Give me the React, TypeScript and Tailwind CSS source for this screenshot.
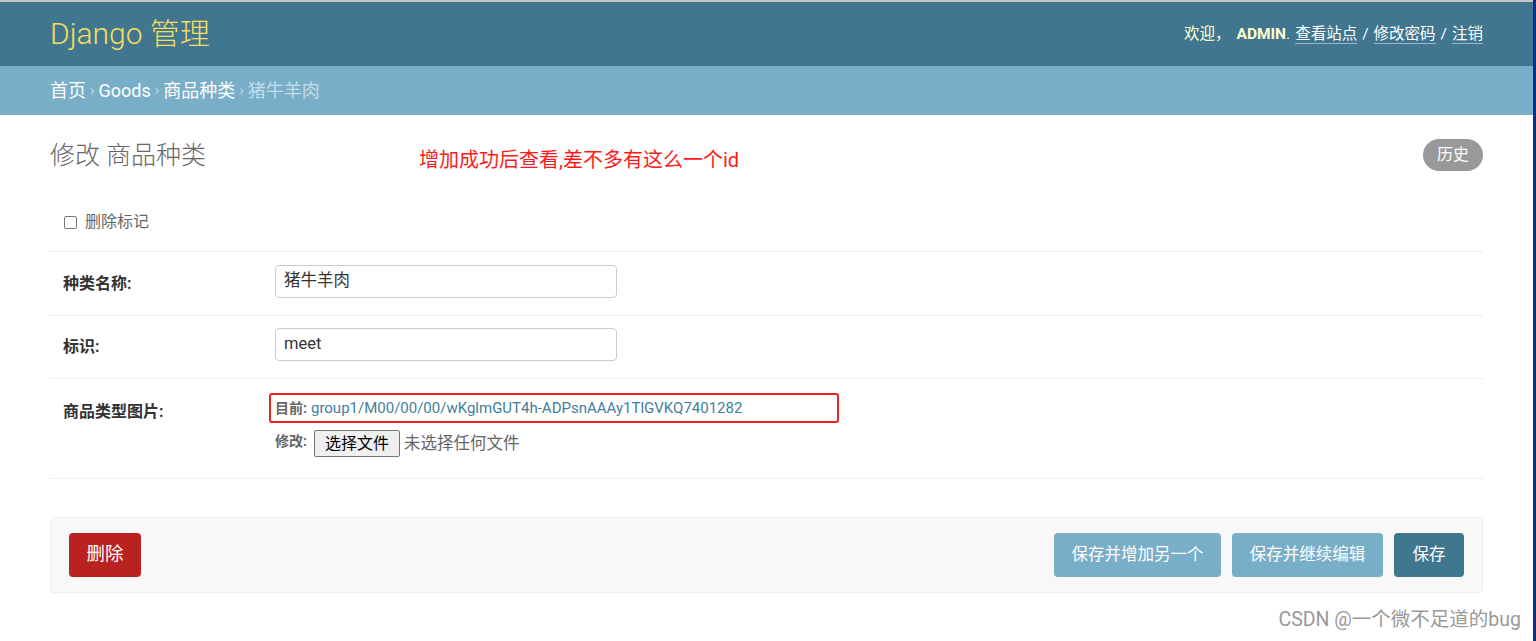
import React from "react";

const font = { fontFamily: 'Roboto, "Noto Sans CJK SC", "Liberation Sans", sans-serif' };

export default function App() {
  return (
    <div className="flex w-full h-[641px] overflow-hidden bg-white" style={font}>
      <div className="flex-1 flex flex-col border-t-2 border-[#c8c8c8]">
        {/* Header */}
        <div className="h-[64px] shrink-0 bg-[#417690] px-[50px] flex items-center justify-between">
          <div className="text-[30px] font-light text-[#f5dd5d] leading-none">Django 管理</div>
          <div className="text-[15.5px] text-[#ffc] flex items-center gap-[5px] pt-[1px]">
            <span>欢迎，</span>
            <span className="font-bold ml-[1px]">ADMIN</span>
            <span className="-ml-[5px]">.</span>
            <span className="text-white border-b border-[#9ab9cc] leading-[18px]">查看站点</span>
            <span className="text-white">/</span>
            <span className="text-white border-b border-[#9ab9cc] leading-[18px]">修改密码</span>
            <span className="text-white">/</span>
            <span className="text-white border-b border-[#9ab9cc] leading-[18px]">注销</span>
          </div>
        </div>
        {/* Breadcrumbs */}
        <div className="h-[49px] shrink-0 bg-[#79aec8] px-[50px] flex items-center text-[18px] text-white gap-[4px]">
          <span>首页</span>
          <span className="text-[#c4dce8] text-[15px]">›</span>
          <span>Goods</span>
          <span className="text-[#c4dce8] text-[15px]">›</span>
          <span>商品种类</span>
          <span className="text-[#c4dce8] text-[15px]">›</span>
          <span className="text-[#c4dce8]">猪牛羊肉</span>
        </div>
        {/* Content */}
        <div className="px-[50px] pt-[24px]">
          <div className="flex items-center h-[32px]">
            <h1 className="text-[25px] font-light text-[#666] leading-none w-[369px] shrink-0">修改 商品种类</h1>
            <div className="text-[20px] text-[#ff1a1a] leading-none pt-[9px]">增加成功后查看,差不多有这么一个id</div>
            <div className="ml-auto h-[32px] px-[14px] rounded-full bg-[#999] text-white text-[16px] flex items-center">历史</div>
          </div>
          {/* checkbox */}
          <div className="flex items-center h-[32px] mt-[35px] pl-[14px] gap-[8px]">
            <span className="w-[13px] h-[13px] border border-[#767676] rounded-[2px] bg-white" />
            <span className="text-[16px] text-[#666]">删除标记</span>
          </div>
          <div className="h-[13px]" />
          {/* Rows */}
          <div className="border-t border-[#eee] flex items-start px-[13px] h-[64px] pt-[13px]">
            <div className="w-[212px] shrink-0 font-bold text-[16px] text-[#333] pt-[7px]">种类名称:</div>
            <div className="w-[342px] h-[33px] border border-[#ccc] rounded-[4px] px-[8px] flex items-center text-[16.5px] text-[#333]">猪牛羊肉</div>
          </div>
          <div className="border-t border-[#eee] flex items-start px-[13px] h-[63px] pt-[12px]">
            <div className="w-[212px] shrink-0 font-bold text-[16px] text-[#333] pt-[7px]">标识:</div>
            <div className="w-[342px] h-[33px] border border-[#ccc] rounded-[4px] px-[8px] flex items-center text-[16.5px] text-[#333]">meet</div>
          </div>
          <div className="border-t border-[#eee] border-b flex items-start px-[13px] h-[101px] pt-[14px]">
            <div className="w-[206px] shrink-0 font-bold text-[16px] text-[#333] pt-[7px]">商品类型图片:</div>
            <div className="flex flex-col">
              <div className="w-[570px] h-[30px] border-[2.5px] border-[#ee2222] rounded-[3px] flex items-center pl-[4px] gap-[4px]">
                <span className="font-bold text-[14px] text-[#666]">目前:</span>
                <span className="text-[15px] text-[#447e9b]">group1/M00/00/00/wKglmGUT4h-ADPsnAAAy1TlGVKQ7401282</span>
              </div>
              <div className="flex items-start pl-[6px] mt-[7px] gap-[4px]">
                <span className="font-bold text-[14px] text-[#666] pt-[1px]">修改:</span>
                <span className="ml-[3px] h-[27px] px-[10px] border border-[#767676] rounded-[2px] bg-[#efefef] text-[16px] text-black flex items-center">选择文件</span>
                <span className="text-[16.5px] text-[#666] pt-[2px]">未选择任何文件</span>
              </div>
            </div>
          </div>
          {/* Submit row */}
          <div className="mt-[38px] h-[76px] border border-[#eee] rounded-[4px] bg-[#f8f8f8] flex items-center px-[18px]">
            <div className="h-[44px] w-[72px] justify-center rounded-[4px] bg-[#ba2121] text-white text-[18.5px] flex items-center">删除</div>
            <div className="ml-auto flex items-center gap-[11px]">
              <div className="h-[44px] w-[167px] justify-center rounded-[4px] bg-[#79aec8] text-white text-[16.5px] flex items-center">保存并增加另一个</div>
              <div className="h-[44px] w-[151px] justify-center rounded-[4px] bg-[#79aec8] text-white text-[16.5px] flex items-center">保存并继续编辑</div>
              <div className="h-[44px] w-[70px] justify-center rounded-[4px] bg-[#417690] text-white text-[16.5px] flex items-center">保存</div>
            </div>
          </div>
          <div className="flex justify-end mt-[12px]">
            <span className="text-[19.5px] text-[#999] mr-[-38px]">CSDN @一个微不足道的bug</span>
          </div>
        </div>
      </div>
      <div className="w-[3px] shrink-0 bg-[#0b2e8c]" />
    </div>
  );
}
